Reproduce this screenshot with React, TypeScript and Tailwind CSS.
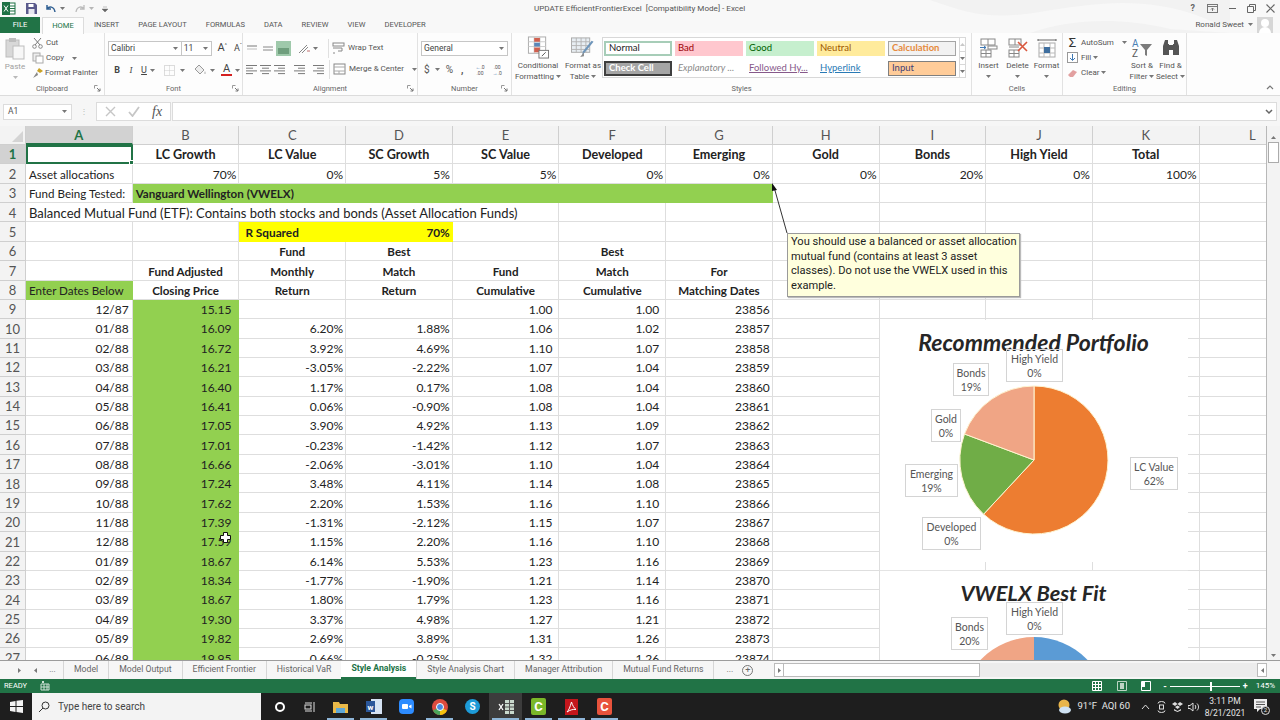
import type { ReactNode } from 'react';

const DATA: [string, string, string, string, string, string, string][] = [
  ['12/87', '15.15', '', '', '1.00', '1.00', '23856'],
  ['01/88', '16.09', '6.20%', '1.88%', '1.06', '1.02', '23857'],
  ['02/88', '16.72', '3.92%', '4.69%', '1.10', '1.07', '23858'],
  ['03/88', '16.21', '-3.05%', '-2.22%', '1.07', '1.04', '23859'],
  ['04/88', '16.40', '1.17%', '0.17%', '1.08', '1.04', '23860'],
  ['05/88', '16.41', '0.06%', '-0.90%', '1.08', '1.04', '23861'],
  ['06/88', '17.05', '3.90%', '4.92%', '1.13', '1.09', '23862'],
  ['07/88', '17.01', '-0.23%', '-1.42%', '1.12', '1.07', '23863'],
  ['08/88', '16.66', '-2.06%', '-3.01%', '1.10', '1.04', '23864'],
  ['09/88', '17.24', '3.48%', '4.11%', '1.14', '1.08', '23865'],
  ['10/88', '17.62', '2.20%', '1.53%', '1.16', '1.10', '23866'],
  ['11/88', '17.39', '-1.31%', '-2.12%', '1.15', '1.07', '23867'],
  ['12/88', '17.59', '1.15%', '2.20%', '1.16', '1.10', '23868'],
  ['01/89', '18.67', '6.14%', '5.53%', '1.23', '1.16', '23869'],
  ['02/89', '18.34', '-1.77%', '-1.90%', '1.21', '1.14', '23870'],
  ['03/89', '18.67', '1.80%', '1.79%', '1.23', '1.16', '23871'],
  ['04/89', '19.30', '3.37%', '4.98%', '1.27', '1.21', '23872'],
  ['05/89', '19.82', '2.69%', '3.89%', '1.31', '1.26', '23873'],
  ['06/89', '19.95', '0.66%', '-0.25%', '1.32', '1.26', '23874'],
];

const COLS = ['A', 'B', 'C', 'D', 'E', 'F', 'G', 'H', 'I', 'J', 'K', 'L'];

function Caret({ className = '' }: { className?: string }) {
  return (
    <svg width="5" height="3" viewBox="0 0 5 3" className={className}>
      <path d="M0 0h5L2.5 3z" fill="#777" />
    </svg>
  );
}

function Launcher() {
  return (
    <svg width="7" height="7" viewBox="0 0 7 7" className="absolute right-[3px] bottom-[3px]">
      <path d="M.5.5h3M.5.5v3" stroke="#999" fill="none" />
      <path d="M3 3l3 3M6 3.5V6H3.5" stroke="#777" fill="none" />
    </svg>
  );
}

function Group({ w, label, launcher, children }: { w: string; label: string; launcher?: boolean; children: ReactNode }) {
  return (
    <div className={`${w} relative flex h-full shrink-0 flex-col whitespace-nowrap border-r border-[#e2e2e2]`}>
      <div className="min-h-0 flex-1">{children}</div>
      <div className="flex h-[12px] items-center justify-center pb-[1px] text-[7.5px] text-[#666]">{label}</div>
      {launcher && <Launcher />}
    </div>
  );
}

function Lines({ kind }: { kind: 'left' | 'center' | 'right' }) {
  const rows = kind === 'left' ? [[1, 12], [1, 8], [1, 12], [1, 8]] : kind === 'center' ? [[1, 12], [3, 10], [1, 12], [3, 10]] : [[1, 12], [5, 12], [1, 12], [5, 12]];
  return (
    <svg width="13" height="11" viewBox="0 0 13 11">
      {rows.map((r, i) => (
        <path key={i} d={`M${r[0]} ${1.5 + i * 2.7}H${r[1]}`} stroke="#7a7a7a" />
      ))}
    </svg>
  );
}

function ClipboardGroup() {
  return (
    <Group w="w-[105px]" label="Clipboard" launcher>
      <div className="flex h-full">
        <div className="flex w-[30px] flex-col items-center pt-[4px] text-[8px] text-[#a0a0a0]">
          <svg width="22" height="23" viewBox="0 0 22 23">
            <rect x="2" y="3" width="13" height="17" fill="#d8d8d8" stroke="#bdbdbd" />
            <rect x="5" y="1" width="7" height="4" fill="#bdbdbd" />
            <rect x="9" y="9" width="11" height="13" fill="#f7f7f7" stroke="#bdbdbd" />
          </svg>
          <span className="mt-[2px] leading-[10px]">Paste</span>
          <Caret className="mt-[4px] opacity-50" />
        </div>
        <div className="flex flex-col gap-[3px] pl-[2px] pt-[4px] text-[8px] leading-[12px] text-[#555]">
          <div className="flex items-center gap-[3px]">
            <svg width="11" height="12" viewBox="0 0 11 12">
              <path d="M2 1l6 7M9 1L3 8" stroke="#777" fill="none" />
              <circle cx="2.5" cy="9.5" r="1.8" fill="none" stroke="#888" />
              <circle cx="8.5" cy="9.5" r="1.8" fill="none" stroke="#888" />
            </svg>
            Cut
          </div>
          <div className="flex items-center gap-[2px]">
            <svg width="12" height="12" viewBox="0 0 12 12">
              <rect x="1" y="1" width="7" height="8" fill="#eee" stroke="#aaa" />
              <rect x="4" y="4" width="7" height="7" fill="#fff" stroke="#aaa" />
            </svg>
            Copy
            <Caret className="ml-[6px]" />
          </div>
          <div className="flex items-center gap-[1px]">
            <svg width="12" height="12" viewBox="0 0 12 12">
              <path d="M7 1l4 3-3 2-3-2z" fill="#c9a227" />
              <path d="M5 5L1 11l5-3z" fill="#888" />
            </svg>
            Format Painter
          </div>
        </div>
      </div>
    </Group>
  );
}

function FontGroup() {
  return (
    <Group w="w-[138px]" label="Font" launcher>
      <div className="flex items-center pl-[3px] pt-[7px] text-[8.5px] text-[#444]">
        <div className="flex h-[15px] w-[74px] items-center justify-between border border-[#c6c6c6] bg-white px-[2px]">
          Calibri
          <Caret className="mr-[1px]" />
        </div>
        <div className="flex h-[15px] w-[30px] items-center justify-between border border-l-0 border-[#c6c6c6] bg-white px-[2px]">
          11
          <Caret className="mr-[1px]" />
        </div>
        <span className="ml-[6px] text-[11px]">A</span>
        <span className="relative -top-[3px] text-[5px]">^</span>
        <span className="ml-[7px] text-[9px]">A</span>
        <span className="relative -top-[3px] text-[5px]">ˇ</span>
      </div>
      <div className="flex items-center pl-[5px] pt-[7px] text-[#444]">
        <span className="w-[14px] text-center text-[9px] font-bold">B</span>
        <span className="w-[14px] text-center font-serif text-[9px] italic">I</span>
        <span className="w-[12px] text-center text-[9px] underline">U</span>
        <Caret />
        <svg width="11" height="11" viewBox="0 0 11 11" className="ml-[9px]">
          <rect x=".5" y=".5" width="10" height="10" fill="none" stroke="#bbb" strokeDasharray="1 1" />
          <path d="M.5 5.5h10M5.5.5v10" stroke="#ccc" strokeDasharray="1 1" />
        </svg>
        <Caret className="ml-[5px]" />
        <svg width="14" height="13" viewBox="0 0 14 13" className="ml-[8px]">
          <path d="M6 1l5 5-4 4-5-5z" fill="#eee" stroke="#999" />
          <path d="M12 7c1 2 1 3 0 3s-1-1 0-3z" fill="#bbb" />
        </svg>
        <Caret className="ml-[3px]" />
        <div className="ml-[6px] flex flex-col items-center">
          <span className="text-[11px] leading-[10px] text-[#444]">A</span>
          <span className="h-[2px] w-[11px] bg-[#d42020]" />
        </div>
        <Caret className="ml-[3px]" />
      </div>
    </Group>
  );
}

function AlignmentGroup() {
  return (
    <Group w="w-[175px]" label="Alignment" launcher>
      <div className="flex h-[22px] items-center pl-[1px] pt-[8px] text-[8px] text-[#555]">
        <div className="flex w-[15px] justify-center">
          <svg width="12" height="9" viewBox="0 0 12 9">
            <rect x="1" y="1" width="10" height="2" fill="#bbb" />
            <rect x="1" y="4" width="10" height="2" fill="#ddd" />
          </svg>
        </div>
        <div className="flex w-[17px] justify-center">
          <svg width="12" height="9" viewBox="0 0 12 9">
            <path d="M1 3h10M1 6h10" stroke="#888" />
          </svg>
        </div>
        <div className="flex h-[15px] w-[15px] items-end justify-center bg-[#9fc9ab] pb-[2px]">
          <svg width="11" height="6" viewBox="0 0 11 6">
            <rect width="11" height="6" fill="#6f9e7d" />
          </svg>
        </div>
        <div className="ml-[5px] flex w-[16px] items-center justify-center">
          <svg width="13" height="11" viewBox="0 0 13 11">
            <path d="M1 10l8-8M4 10L10 4" stroke="#888" />
            <path d="M9 8h3" stroke="#c07070" />
          </svg>
        </div>
        <Caret className="ml-[1px]" />
        <span className="ml-[10px] h-[19px] w-px bg-[#e0e0e0]" />
        <div className="ml-[3px] flex items-center gap-[3px]">
          <svg width="13" height="12" viewBox="0 0 13 12">
            <rect x="1" y="1" width="11" height="3" fill="#fff" stroke="#888" />
            <path d="M1 6h9v3H6M3 11H1" stroke="#888" fill="none" />
          </svg>
          Wrap Text
        </div>
      </div>
      <div className="flex h-[21px] items-center pl-[1px] pt-[7px] text-[8px] text-[#555]">
        <div className="flex w-[16px] justify-center">
          <Lines kind="left" />
        </div>
        <div className="flex w-[16px] justify-center">
          <Lines kind="center" />
        </div>
        <div className="flex w-[16px] justify-center">
          <Lines kind="right" />
        </div>
        <div className="ml-[6px] flex w-[15px] justify-center">
          <Lines kind="right" />
        </div>
        <div className="ml-[5px] flex w-[15px] justify-center">
          <Lines kind="right" />
        </div>
        <span className="ml-[4px] h-[19px] w-px bg-[#e0e0e0]" />
        <div className="ml-[3px] flex items-center gap-[3px]">
          <svg width="13" height="12" viewBox="0 0 13 12">
            <rect x="1" y="1" width="11" height="10" fill="#fff" stroke="#888" />
            <path d="M1 4h11M1 8h11" stroke="#aaa" />
            <path d="M6 8v3" stroke="#aaa" />
          </svg>
          Merge &amp; Center
          <Caret className="ml-[5px]" />
        </div>
      </div>
    </Group>
  );
}

function NumberGroup() {
  return (
    <Group w="w-[94px]" label="Number" launcher>
      <div className="px-[3px] pt-[8px] text-[8.5px] text-[#444]">
        <div className="flex h-[15px] w-[87px] items-center justify-between border border-[#c6c6c6] bg-white px-[2px]">
          General
          <Caret className="mr-[1px]" />
        </div>
        <div className="flex items-center pl-[3px] pt-[6px] text-[#555]">
          <span className="text-[10px]">$</span>
          <Caret className="ml-[5px]" />
          <span className="ml-[6px] text-[10px]">%</span>
          <span className="ml-[8px] text-[10px] font-bold">,</span>
          <span className="ml-[12px] text-center text-[5px] leading-[6px]">
            <span className="text-[#3a70a8]">←</span>.0<br />.00
          </span>
          <span className="ml-[8px] text-center text-[5px] leading-[6px]">
            .00<br /><span className="text-[#3a70a8]">→</span>.0
          </span>
        </div>
      </div>
    </Group>
  );
}

function StyleCell({ className, children }: { className: string; children: ReactNode }) {
  return <div className={`flex h-[15px] w-[68px] items-center whitespace-nowrap pl-[3px] text-[9.5px] ${className}`}>{children}</div>;
}

function Big({ w, icon, lines }: { w: string; icon: ReactNode; lines: string[] }) {
  return (
    <div className={`${w} flex flex-col items-center pt-[3px] text-[8px] leading-[11px] text-[#555]`}>
      <div className="flex h-[23px] items-center">{icon}</div>
      <span className="mt-[1px] whitespace-nowrap">{lines[0]}</span>
      <span className="flex items-center gap-[2px] whitespace-nowrap">
        {lines[1]}
        <Caret />
      </span>
    </div>
  );
}

function StylesGroup() {
  return (
    <Group w="w-[460px]" label="Styles">
      <div className="flex h-full">
        <Big
          w="w-[52px]"
          lines={['Conditional', 'Formatting']}
          icon={
            <svg width="26" height="23" viewBox="0 0 26 24">
              <rect x="3" y="1" width="18" height="17" fill="#fff" stroke="#aaa" />
              <path d="M3 6h18M3 11h18M9 1v17M15 1v17" stroke="#ccc" />
              <rect x="9" y="2" width="6" height="4" fill="#d0604f" />
              <rect x="9" y="7" width="6" height="4" fill="#5b87b8" />
              <rect x="9" y="12" width="6" height="5" fill="#d0604f" />
              <rect x="14" y="15" width="10" height="8" fill="#fff" stroke="#777" />
              <path d="M17 21l4-4" stroke="#555" />
            </svg>
          }
        />
        <Big
          w="w-[38px]"
          lines={['Format as', 'Table']}
          icon={
            <svg width="26" height="23" viewBox="0 0 26 24">
              <rect x="1" y="2" width="19" height="15" fill="#e8eef3" stroke="#aaa" />
              <path d="M1 6h19M1 10h19M1 14h19M6 2v15M11 2v15M16 2v15" stroke="#b5b5b5" />
              <path d="M24 6l-9 11-3 3 1-4 9-11z" fill="#6e95ba" />
              <path d="M14 17l-4 5 4-1z" fill="#8a8a8a" />
            </svg>
          }
        />
        <div className="mt-[4px] flex h-[41px] w-[364px] border border-[#d8d8d8] bg-white">
          <div className="grid flex-1 grid-cols-[repeat(5,71px)] gap-y-[3px] pl-[1px] pt-[3px] font-['Lato',sans-serif]">
            <StyleCell className="border-2 border-[#a7cdb8] text-[#222]">Normal</StyleCell>
            <StyleCell className="bg-[#ffc7ce] text-[#9c0006]">Bad</StyleCell>
            <StyleCell className="bg-[#c6efce] text-[#006100]">Good</StyleCell>
            <StyleCell className="bg-[#ffeb9c] text-[#9c5700]">Neutral</StyleCell>
            <StyleCell className="border border-[#a5a5a5] bg-[#f2f2f2] font-bold text-[#e68a3c]">Calculation</StyleCell>
            <StyleCell className="border-2 border-[#3f3f3f] bg-[#a5a5a5] font-bold text-white">Check Cell</StyleCell>
            <StyleCell className="italic text-[#8a8a8a]">Explanatory ...</StyleCell>
            <StyleCell className="text-[#86598a] underline">Followed Hy...</StyleCell>
            <StyleCell className="text-[#2a7ab5] underline">Hyperlink</StyleCell>
            <StyleCell className="border border-[#7f7f7f] bg-[#ffcc99] text-[#3f3f76]">Input</StyleCell>
          </div>
          <div className="flex w-[8px] flex-col border-l border-[#d8d8d8] text-[5px] text-[#888]">
            <div className="flex h-[13px] items-center justify-center"><Caret className="rotate-180 opacity-40" /></div>
            <div className="flex h-[14px] items-center justify-center border-y border-[#d8d8d8]"><Caret /></div>
            <div className="flex flex-1 items-center justify-center"><Caret /></div>
          </div>
        </div>
      </div>
    </Group>
  );
}

function CellsItem({ w, label, icon }: { w: string; label: string; icon: ReactNode }) {
  return (
    <div className={`${w} flex flex-col items-center pt-[3px] text-[8px] leading-[11px] text-[#555]`}>
      <div className="flex h-[23px] items-center">{icon}</div>
      <span className="mt-[1px]">{label}</span>
      <Caret className="mt-[4px]" />
    </div>
  );
}

function CellsGroup() {
  return (
    <Group w="w-[91px]" label="Cells">
      <div className="flex h-full pl-[2px]">
        <CellsItem
          w="w-[29px]"
          label="Insert"
          icon={
            <svg width="20" height="20" viewBox="0 0 20 20">
              <rect x="2" y="1" width="14" height="6" fill="#fff" stroke="#888" />
              <path d="M9 1v6" stroke="#888" />
              <rect x="9" y="8" width="9" height="3" fill="#fff" stroke="#888" />
              <path d="M1 9.5h6M5 8l2 1.5L5 11" stroke="#3f79b5" fill="none" />
              <rect x="2" y="12" width="10" height="7" fill="#fff" stroke="#888" />
              <path d="M7 12v7M2 15.5h10" stroke="#888" />
            </svg>
          }
        />
        <CellsItem
          w="w-[29px]"
          label="Delete"
          icon={
            <svg width="22" height="20" viewBox="0 0 22 20">
              <rect x="2" y="1" width="12" height="6" fill="#fff" stroke="#888" />
              <path d="M8 1v6M2 9h10" stroke="#888" />
              <rect x="2" y="12" width="10" height="7" fill="#fff" stroke="#888" />
              <path d="M7 12v7M2 15.5h10" stroke="#888" />
              <path d="M11 4l9 9M20 4l-9 9" stroke="#d9573d" strokeWidth="1.6" />
            </svg>
          }
        />
        <CellsItem
          w="w-[29px]"
          label="Format"
          icon={
            <svg width="20" height="20" viewBox="0 0 20 20">
              <path d="M1 2h18M1 1v2M19 1v2" stroke="#666" />
              <rect x="2" y="5" width="16" height="14" fill="#fff" stroke="#aaa" />
              <path d="M7 5v14M13 5v14M2 10h16M2 15h16" stroke="#bbb" />
              <rect x="7" y="9" width="6" height="6" fill="#3f6f9f" />
            </svg>
          }
        />
      </div>
    </Group>
  );
}

function EditingGroup() {
  return (
    <Group w="w-[124px]" label="Editing">
      <div className="flex h-full text-[8px] text-[#555]">
        <div className="flex w-[66px] flex-col gap-[4px] pl-[4px] pt-[4px] leading-[11px]">
          <div className="flex items-center gap-[2px]">
            <span className="w-[11px] text-center text-[13px] leading-[11px] text-[#333]">Σ</span>
            <span className="ml-[1px]">AutoSum</span>
            <Caret className="ml-[6px]" />
          </div>
          <div className="flex items-center gap-[2px]">
            <svg width="11" height="11" viewBox="0 0 11 11">
              <rect x=".5" y=".5" width="10" height="10" fill="#fff" stroke="#999" />
              <path d="M5.5 2v6M3 6l2.5 2.5L8 6" stroke="#3f79b5" fill="none" />
            </svg>
            <span className="ml-[1px]">Fill</span>
            <Caret />
          </div>
          <div className="flex items-center gap-[2px]">
            <svg width="11" height="10" viewBox="0 0 11 10">
              <path d="M1 7l5-5 4 2-4 5H3z" fill="#e2a0a0" />
            </svg>
            <span className="ml-[1px]">Clear</span>
            <Caret />
          </div>
        </div>
        <Big
          w="w-[26px]"
          lines={['Sort &', 'Filter']}
          icon={
            <svg width="22" height="22" viewBox="0 0 22 22">
              <text x="1" y="10" fontSize="10" fill="#4a7fb5" fontFamily="Roboto">A</text>
              <text x="1" y="20" fontSize="10" fill="#555" fontFamily="Roboto">Z</text>
              <path d="M9 7h12l-5 6v6l-2-1v-5z" fill="#7c7c7c" />
            </svg>
          }
        />
        <Big
          w="w-[31px]"
          lines={['Find &', 'Select']}
          icon={
            <svg width="18" height="18" viewBox="0 0 18 18">
              <path d="M3 1h3v4h1v11H1V7zM12 1h3l2 6v9h-6V5h1zM7 6h4v5H7z" fill="#555" />
            </svg>
          }
        />
      </div>
    </Group>
  );
}

function Ribbon() {
  return (
    <div className="relative flex h-[63px] shrink-0 border-b border-[#dcdcdc] bg-[#fdfdfd]">
      <ClipboardGroup />
      <FontGroup />
      <AlignmentGroup />
      <NumberGroup />
      <StylesGroup />
      <CellsGroup />
      <EditingGroup />
      <svg width="8" height="5" viewBox="0 0 8 5" className="absolute bottom-[5px] right-[6px]">
        <path d="M1 4l3-3 3 3" stroke="#777" fill="none" strokeWidth="1.2" />
      </svg>
    </div>
  );
}

function TitleBar() {
  return (
    <div className="relative flex h-[17px] shrink-0 items-center">
      <svg width="14" height="13" viewBox="0 0 14 13" className="ml-[2px]">
        <rect x="5" y="1" width="8" height="11" fill="#fff" stroke="#1e7145" />
        <path d="M7 4h6M7 6.5h6M7 9h6" stroke="#1e7145" />
        <rect width="8" height="13" fill="#1e7145" />
        <path d="M2 3.5l4 6M6 3.5l-4 6" stroke="#fff" />
      </svg>
      <svg width="11" height="11" viewBox="0 0 11 11" className="ml-[10px]">
        <path d="M0 0h9l2 2v9H0z" fill="#5a5a8c" />
        <rect x="2.5" y="1" width="5" height="3" fill="#fff" />
        <rect x="2.5" y="6" width="6" height="5" fill="#e8e8f0" />
      </svg>
      <svg width="12" height="10" viewBox="0 0 12 10" className="ml-[8px]">
        <path d="M2 1v4h4M2 5c2-3 7-3 8 3" stroke="#2f5f92" strokeWidth="1.5" fill="none" />
      </svg>
      <Caret className="ml-[3px]" />
      <svg width="12" height="10" viewBox="0 0 12 10" className="ml-[9px]">
        <path d="M10 1v4H6M10 5C8 2 3 2 2 8" stroke="#bbb" strokeWidth="1.3" fill="none" />
      </svg>
      <Caret className="ml-[3px] opacity-50" />
      <svg width="6" height="6" viewBox="0 0 6 6" className="ml-[8px]">
        <path d="M1 1h4M0 3h6L3 6z" fill="#666" stroke="#666" strokeWidth=".4" />
      </svg>
      <svg width="300" height="33" viewBox="0 0 300 33" className="absolute left-[930px] top-0">
        <path d="M0 0c40 14 60 20 110 12S190 0 230 6s50 18 70 20V0z" fill="#f2f2f2" />
        <path d="M100 33c40-14 90-16 140-4l60 4z" fill="#f2f2f2" />
      </svg>
      <div className="absolute left-[534px] top-[1px] whitespace-nowrap text-[8.1px] leading-[15px] text-[#555]">
        UPDATE EfficientFrontierExcel&nbsp; [Compatibility Mode] - Excel
      </div>
      <div className="relative ml-auto flex items-center text-[#666]">
        <span className="mr-[12px] text-[9px] font-bold">?</span>
        <svg width="11" height="9" viewBox="0 0 11 9" className="mr-[11px]">
          <rect x=".5" y=".5" width="10" height="8" fill="none" stroke="#777" />
          <path d="M.5 2.5h10M5.5 7V4M4 5.5L5.5 4 7 5.5" stroke="#777" fill="none" />
        </svg>
        <span className="mr-[11px] h-px w-[7px] bg-[#666]" />
        <svg width="9" height="9" viewBox="0 0 9 9" className="mr-[10px]">
          <path d="M2.5 2V.5h6v6H7M.5 2.5h6v6h-6z" stroke="#666" fill="none" />
        </svg>
        <svg width="9" height="9" viewBox="0 0 9 9" className="mr-[5px]">
          <path d="M.5.5l8 8M8.5.5l-8 8" stroke="#666" strokeWidth="1.1" />
        </svg>
      </div>
    </div>
  );
}

function TabRow() {
  const tabs = ['INSERT', 'PAGE LAYOUT', 'FORMULAS', 'DATA', 'REVIEW', 'VIEW', 'DEVELOPER'];
  return (
    <div className="relative flex h-[16px] shrink-0 items-stretch text-[7.6px] text-[#555]">
      <div className="flex w-[40px] items-center justify-center bg-[#217346] text-white">FILE</div>
      <div className="relative z-10 ml-[2px] -mb-px mr-[10px] flex w-[42px] items-center justify-center border-x border-t border-[#dcdcdc] bg-[#fdfdfd] text-[#217346]">HOME</div>
      <div className="flex gap-[19px]">
        {tabs.map((t) => (
          <div key={t} className="flex items-center whitespace-nowrap">{t}</div>
        ))}
      </div>
      <div className="relative ml-auto flex items-center pb-[1px] pr-[7px] text-[8px] text-[#555]">
        Ronald Sweet
        <Caret className="ml-[4px]" />
        <div className="relative ml-[4px] h-[16px] w-[16px] overflow-hidden bg-[#d6d6d6]">
          <div className="absolute left-[4px] top-[2px] h-[8px] w-[8px] rounded-full bg-white" />
          <div className="absolute left-[2px] top-[10px] h-[8px] w-[12px] rounded-t-md bg-white" />
        </div>
      </div>
    </div>
  );
}

function FormulaBar() {
  return (
    <div className="flex h-[30px] shrink-0 items-center bg-[#f6f6f6] pb-[1px] pt-[2px]">
      <div className="ml-[3px] flex h-[16px] w-[69px] items-center justify-between border border-[#dcdcdc] bg-white px-[4px] text-[8.5px] text-[#555]">
        A1
        <Caret />
      </div>
      <span className="ml-[8px] text-[8px] text-[#bbb]">⋮</span>
      <div className="ml-[8px] flex h-[19px] w-[75px] items-center gap-[12px] border border-[#dcdcdc] bg-white pl-[8px]">
        <svg width="11" height="11" viewBox="0 0 11 11">
          <path d="M1 1l9 9M10 1l-9 9" stroke="#c6c6c6" strokeWidth="1.4" />
        </svg>
        <svg width="12" height="11" viewBox="0 0 12 11">
          <path d="M1 6l3.5 4L11 1" stroke="#c6c6c6" strokeWidth="1.8" fill="none" />
        </svg>
        <span className="font-['Liberation_Serif',serif] text-[14px] italic leading-[14px] text-[#555]">fx</span>
      </div>
      <div className="ml-[1px] mr-[3px] flex h-[19px] flex-1 items-center justify-end border border-[#dcdcdc] bg-white pr-[3px]">
        <svg width="8" height="6" viewBox="0 0 8 6">
          <path d="M1 1l3 3 3-3" stroke="#666" strokeWidth="1.5" fill="none" />
        </svg>
      </div>
    </div>
  );
}

// fill cells hide their gridlines, so the border colour goes with the fill
const FILLS = {
  none: 'border-[#dedede]',
  green: 'border-[#92d050] bg-[#92d050]',
  yellow: 'border-[#ffff00] bg-[#ffff00]',
};

function Cell({ className = '', fill = 'none', children }: { className?: string; fill?: keyof typeof FILLS; children?: ReactNode }) {
  return (
    <div className={`flex min-w-0 items-center whitespace-nowrap border-b border-r pt-[2px] text-[#222] ${FILLS[fill]} ${className}`}>
      {children}
    </div>
  );
}

function RowHead({ n, active }: { n: number; active?: boolean }) {
  return (
    <div className={`flex items-center justify-center border-b border-r border-[#cfcfcf] pt-[2px] text-[13px] ${active ? 'bg-[#d2d2d2] font-bold text-[#217346]' : 'bg-[#f3f3f3] text-[#555]'}`}>
      {n}
    </div>
  );
}

function Blank({ n }: { n: number }) {
  return (
    <>
      {Array.from({ length: n }, (_, i) => (
        <Cell key={i} />
      ))}
    </>
  );
}

function Head({ children, top }: { children: ReactNode; top?: boolean }) {
  return <Cell className={`justify-center font-bold ${top ? 'text-[12.6px]' : 'text-[11.6px]'}`}>{children}</Cell>;
}

function Num({ children, pad = 'pr-[2px]' }: { children: ReactNode; pad?: string }) {
  return <Cell className={`justify-end text-[12px] ${pad}`}>{children}</Cell>;
}

function Grid() {
  return (
    <div className="grid grid-cols-[26px_repeat(12,106.7px)] grid-rows-[19px] auto-rows-[19.36px] font-['Lato',sans-serif]">
      <div className="relative border-b border-r border-[#cfcfcf] bg-[#f3f3f3]">
        <svg width="11" height="11" viewBox="0 0 11 11" className="absolute bottom-[2px] right-[2px]">
          <path d="M11 0v11H0z" fill="#d4d4d4" />
        </svg>
      </div>
      {COLS.map((c) =>
        c === 'A' ? (
          <div key={c} className="flex items-center justify-center border-b-2 border-r border-b-[#217346] border-r-[#cfcfcf] bg-[#d2d2d2] pt-[2px] text-[13px] font-bold text-[#217346]">
            {c}
          </div>
        ) : (
          <div key={c} className="flex items-center justify-center border-b border-r border-[#cfcfcf] bg-[#f3f3f3] pt-[2px] text-[13px] text-[#555]">
            {c}
          </div>
        ),
      )}

      <RowHead n={1} active />
      <div className="relative border-2 border-[#217346]">
        <span className="absolute -bottom-[3px] -right-[3px] h-[5px] w-[5px] border border-white bg-[#217346]" />
      </div>
      <Head top>LC Growth</Head>
      <Head top>LC Value</Head>
      <Head top>SC Growth</Head>
      <Head top>SC Value</Head>
      <Head top>Developed</Head>
      <Head top>Emerging</Head>
      <Head top>Gold</Head>
      <Head top>Bonds</Head>
      <Head top>High Yield</Head>
      <Head top>Total</Head>
      <Blank n={1} />

      <RowHead n={2} />
      <Cell className="pl-[3px] text-[11.6px]">Asset allocations</Cell>
      {['70%', '0%', '5%', '5%', '0%', '0%', '0%', '20%', '0%', '100%'].map((v, i) => (
        <Num key={i}>{v}</Num>
      ))}
      <Blank n={1} />

      <RowHead n={3} />
      <Cell className="pl-[3px] text-[11.6px]">Fund Being Tested:</Cell>
      <Cell fill="green" className="col-span-6 pl-[3px] text-[11.6px] font-bold">Vanguard Wellington (VWELX)</Cell>
      <Blank n={5} />

      <RowHead n={4} />
      <Cell className="col-span-5 pl-[3px] text-[13px]">Balanced Mutual Fund (ETF): Contains both stocks and bonds (Asset Allocation Funds)</Cell>
      <Blank n={7} />

      <RowHead n={5} />
      <Blank n={2} />
      <Cell fill="yellow" className="col-span-2 justify-between pl-[6px] pr-[2px] text-[11.8px] font-bold">
        <span>R Squared</span>
        <span>70%</span>
      </Cell>
      <Blank n={8} />

      <RowHead n={6} />
      <Blank n={2} />
      <Head>Fund</Head>
      <Head>Best</Head>
      <Blank n={1} />
      <Head>Best</Head>
      <Blank n={6} />

      <RowHead n={7} />
      <Blank n={1} />
      <Head>Fund Adjusted</Head>
      <Head>Monthly</Head>
      <Head>Match</Head>
      <Head>Fund</Head>
      <Head>Match</Head>
      <Head>For</Head>
      <Blank n={5} />

      <RowHead n={8} />
      <Cell fill="green" className="pl-[3px] text-[11.6px]">Enter Dates Below</Cell>
      <Head>Closing Price</Head>
      <Head>Return</Head>
      <Head>Return</Head>
      <Head>Cumulative</Head>
      <Head>Cumulative</Head>
      <Head>Matching Dates</Head>
      <Blank n={5} />

      {DATA.map((r, i) => (
        <DataRow key={r[6]} n={i + 9} r={r} />
      ))}
    </div>
  );
}

function DataRow({ n, r }: { n: number; r: string[] }) {
  return (
    <>
      <RowHead n={n} />
      <Num pad="pr-[3px]">{r[0]}</Num>
      <Cell fill="green" className="justify-end pr-[7px] text-[12px]">{r[1]}</Cell>
      <Num>{r[2]}</Num>
      <Num>{r[3]}</Num>
      <Num pad="pr-[6px]">{r[4]}</Num>
      <Num pad="pr-[6px]">{r[5]}</Num>
      <Num>{r[6]}</Num>
      <Blank n={5} />
    </>
  );
}

function Label({ pos, a, b }: { pos: string; a: string; b: string }) {
  return (
    <div className={`${pos} absolute flex h-[33px] flex-col items-center justify-center border border-[#d4d4d4] text-[10.5px] leading-[14px] text-[#555]`}>
      <span>{a}</span>
      <span>{b}</span>
    </div>
  );
}

function Charts() {
  return (
    <>
      <div className="absolute left-[880px] top-[194px] h-[242px] w-[308px] bg-white font-['Lato',sans-serif]">
        <svg width="308" height="242" viewBox="880 320 308 242" className="absolute left-0 top-0">
          <path d="M1034 460V386A74 74 0 1 1 983.6 514.2Z" fill="#ed7d31" stroke="#fff4d0" />
          <path d="M1034 460L983.6 514.2A74 74 0 0 1 964.5 434Z" fill="#70ad47" stroke="#fff4d0" />
          <path d="M1034 460L964.5 434A74 74 0 0 1 1034 386Z" fill="#f0a585" stroke="#fff4d0" />
        </svg>
        <div className="absolute inset-x-0 top-[8px] -ml-[1px] text-center text-[23px] font-bold italic leading-[28px] text-[#262626]">Recommended Portfolio</div>
        <Label pos="left-[126px] top-[29px] w-[57px]" a="High Yield" b="0%" />
        <Label pos="left-[73px] top-[43px] w-[36px]" a="Bonds" b="19%" />
        <Label pos="left-[51px] top-[89px] w-[30px]" a="Gold" b="0%" />
        <Label pos="left-[25px] top-[144px] w-[53px]" a="Emerging" b="19%" />
        <Label pos="left-[42px] top-[197px] w-[59px]" a="Developed" b="0%" />
        <Label pos="left-[250px] top-[137px] w-[48px]" a="LC Value" b="62%" />
      </div>
      <div className="absolute left-[880px] top-[444px] h-[100px] w-[308px] overflow-hidden border-t border-[#e4e4e4] bg-white font-['Lato',sans-serif]">
        <svg width="308" height="100" viewBox="880 570 308 100" className="absolute left-0 top-0">
          <path d="M1034 710V636A74 74 0 0 1 1108 710Z" fill="#5b9bd5" />
          <path d="M1034 710V636A74 74 0 0 0 960 710Z" fill="#f0a585" />
        </svg>
        <div className="absolute inset-x-0 top-[8px] -ml-[1px] text-center text-[21.8px] font-bold italic leading-[28px] text-[#262626]">VWELX Best Fit</div>
        <Label pos="left-[126px] top-[31px] w-[57px]" a="High Yield" b="0%" />
        <Label pos="left-[71px] top-[46px] w-[37px]" a="Bonds" b="20%" />
      </div>
    </>
  );
}

function Note() {
  return (
    <>
      <svg width="30" height="56" viewBox="0 0 30 56" className="absolute left-[766px] top-[55px]">
        <path d="M21 52L8 6" stroke="#333" fill="none" />
        <path d="M6 2l5 7-5 1z" fill="#111" />
      </svg>
      <div className="absolute left-[787px] top-[107px] flex h-[64px] w-[233px] flex-col justify-center whitespace-nowrap border border-[#9a9a9a] bg-[#ffffdd] pb-[2px] pl-[3px] font-['Roboto',sans-serif] text-[11.1px] leading-[14.5px] text-[#222] shadow-[1px_1px_1px_#bbb]">
        <span>You should use a balanced or asset allocation</span>
        <span>mutual fund (contains at least 3 asset</span>
        <span>classes). Do not use the VWELX used in this</span>
        <span>example.</span>
      </div>
    </>
  );
}

function Sheet() {
  return (
    <div className="flex min-h-0 flex-1 border-b border-[#9c9c9c]">
      <div className="relative min-w-0 flex-1 overflow-hidden border-r border-[#b8b8b8] bg-white">
        <Grid />
        <Note />
        <Charts />
        <svg width="11" height="11" viewBox="0 0 11 11" className="absolute left-[220px] top-[406px]">
          <path d="M3.5.5h4v3h3v4h-3v3h-4v-3h-3v-4h3z" fill="#fff" stroke="#111" />
        </svg>
      </div>
      <div className="flex w-[13px] shrink-0 flex-col bg-[#f3f3f3]">
        <div className="mx-[1px] mt-[7px] flex h-[8px] items-center justify-center"><Caret className="rotate-180" /></div>
        <div className="mx-[1px] mt-[1px] h-[21px] border border-[#ababab] bg-white" />
        <div className="flex-1" />
        <div className="flex h-[9px] items-center justify-center"><Caret /></div>
      </div>
    </div>
  );
}

function SheetTabs() {
  const tabs = ['Model', 'Model Output', 'Efficient Frontier', 'Historical VaR', 'Style Analysis', 'Style Analysis Chart', 'Manager Attribution', 'Mutual Fund Returns'];
  return (
    <div className="flex h-[18px] shrink-0 items-stretch bg-[#f6f6f6] text-[8.7px] text-[#666]">
      <div className="flex w-[63px] items-center justify-around pl-[12px] pr-[2px] text-[8px]">
        <Caret className="-rotate-90" />
        <Caret className="rotate-90" />
        <span>...</span>
      </div>
      {tabs.map((t) => (
        <div
          key={t}
          className={`flex items-center whitespace-nowrap px-[10px] ${t === 'Style Analysis' ? 'border-b-2 border-[#217346] bg-white font-bold text-[#217346]' : 'border-l border-[#d6d6d6]'}`}
        >
          {t}
        </div>
      ))}
      <div className="flex w-[46px] items-center gap-[9px] border-l border-[#d6d6d6] pl-[12px]">
        <span>...</span>
        <span className="flex h-[11px] w-[11px] items-center justify-center rounded-full border border-[#777] text-[9px] leading-[9px]">+</span>
      </div>
      <div className="ml-[15px] flex flex-1 items-center">
        <div className="flex h-[14px] w-[10px] items-center justify-center border border-[#bbb] bg-white"><Caret className="-rotate-90" /></div>
        <div className="h-[14px] w-[196px] border-y border-r border-[#bbb] bg-white" />
        <div className="h-[14px] flex-1 bg-[#ececec]" />
        <div className="flex h-[14px] w-[10px] items-center justify-center border border-[#bbb] bg-white"><Caret className="rotate-90" /></div>
        <div className="w-[13px]" />
      </div>
    </div>
  );
}

function StatusBar() {
  return (
    <div className="flex h-[14px] shrink-0 items-center bg-[#217346] pl-[4px] text-[7.5px] text-white">
      READY
      <svg width="10" height="10" viewBox="0 0 10 10" className="ml-[13px]">
        <path d="M1 3h8v6H1zM1 6h8M4 3v6M7 3v6" stroke="#cfe3d6" fill="none" />
        <rect x="2" y="0" width="2" height="2" fill="#cfe3d6" />
      </svg>
      <div className="ml-auto flex h-full items-center">
        <svg width="10" height="10" viewBox="0 0 10 10">
          <path d="M.5.5h9v9h-9zM.5 3.5h9M.5 6.5h9M3.5.5v9M6.5.5v9" stroke="#fff" fill="none" />
        </svg>
        <svg width="10" height="10" viewBox="0 0 10 10" className="ml-[15px]">
          <path d="M.5.5h9v9h-9z" stroke="#bcd4c4" fill="none" />
          <rect x="3" y="2" width="4" height="6" fill="#bcd4c4" />
        </svg>
        <svg width="10" height="10" viewBox="0 0 10 10" className="ml-[14px]">
          <path d="M.5.5h9v9h-9z" stroke="#fff" fill="none" />
          <rect x="1" y="1" width="3" height="5" fill="#fff" />
        </svg>
        <span className="ml-[12px] text-[9px] font-bold leading-[9px]">-</span>
        <div className="relative ml-[3px] h-px w-[70px] bg-white">
          <span className="absolute left-[40px] top-[-4px] h-[9px] w-[2px] bg-white" />
        </div>
        <span className="ml-[3px] text-[9px] font-bold leading-[9px]">+</span>
        <span className="ml-[8px] mr-[5px] text-[8px]">145%</span>
      </div>
    </div>
  );
}

function AppIcon({ active, open, children }: { active?: boolean; open?: boolean; children: ReactNode }) {
  return (
    <div className={`relative flex h-full w-[33px] items-center justify-center ${active ? 'bg-[#3c3c3c]' : ''}`}>
      {children}
      {open && <span className="absolute bottom-0 left-[3px] right-[3px] h-[2px] bg-[#8fb6d8]" />}
    </div>
  );
}

function Taskbar() {
  return (
    <div className="flex h-[27px] shrink-0 items-stretch bg-[#1e1e1e] text-white">
      <div className="flex w-[32px] items-center justify-center">
        <svg width="13" height="13" viewBox="0 0 13 13">
          <path d="M0 2l5.5-1v5H0zM6.5.8L13 0v6H6.5zM0 7h5.5v5L0 11zM6.5 7H13v6l-6.5-1z" fill="#f2f2f2" />
        </svg>
      </div>
      <div className="flex w-[229px] items-center gap-[8px] bg-[#f3f3f3] pl-[6px] text-[10px] text-[#444]">
        <svg width="12" height="12" viewBox="0 0 12 12">
          <circle cx="7.5" cy="4.5" r="3.5" fill="none" stroke="#333" />
          <path d="M5 7l-4 4" stroke="#333" />
        </svg>
        Type here to search
      </div>
      <div className="ml-[2px] flex items-center">
        <div className="flex w-[33px] justify-center">
          <span className="h-[10px] w-[10px] rounded-full border-2 border-white" />
        </div>
        <div className="flex w-[28px] justify-center">
          <svg width="12" height="12" viewBox="0 0 12 12">
            <path d="M1 2h7M1 10h7M10 1v10" stroke="#ddd" />
            <rect x="1" y="4" width="6" height="4" fill="none" stroke="#ddd" />
          </svg>
        </div>
      </div>
      <div className="flex">
        <AppIcon open>
          <svg width="15" height="14" viewBox="0 0 15 14">
            <path d="M0 2h6l1 2h8v9H0z" fill="#e9b949" />
            <rect x="3" y="8" width="9" height="5" fill="#5fa8d8" />
          </svg>
        </AppIcon>
        <AppIcon open>
          <svg width="16" height="15" viewBox="0 0 16 15">
            <rect x="5" y="0" width="11" height="15" fill="#d6e3f3" />
            <rect x="0" y="2" width="9" height="11" fill="#2b579a" />
            <text x="1.5" y="10.5" fontSize="8" fontWeight="700" fill="#fff" fontFamily="Roboto">w</text>
          </svg>
        </AppIcon>
        <AppIcon>
          <svg width="15" height="15" viewBox="0 0 15 15">
            <rect width="15" height="15" rx="4" fill="#2d8cff" />
            <rect x="3" y="5" width="6" height="5" rx="1" fill="#fff" />
            <path d="M10 7l2.5-1.5v4L10 8z" fill="#fff" />
          </svg>
        </AppIcon>
        <AppIcon open>
          <svg width="16" height="16" viewBox="0 0 16 16">
            <circle cx="8" cy="8" r="8" fill="#dc4b3e" />
            <path d="M8 8L1 11.5A8 8 0 0 0 8 16z" fill="#4aa55a" />
            <path d="M8 8l7 3.5A8 8 0 0 1 8 16z" fill="#f4c20d" />
            <circle cx="8" cy="8" r="3.5" fill="#4a8ae0" stroke="#fff" />
          </svg>
        </AppIcon>
        <AppIcon>
          <div className="flex h-[15px] w-[15px] items-center justify-center rounded-full bg-[#1d9bd8] text-[10px] font-bold">S</div>
        </AppIcon>
        <AppIcon active open>
          <svg width="16" height="14" viewBox="0 0 16 14">
            <rect x="7" y="0" width="9" height="14" fill="#c9d9cd" />
            <path d="M7 3.5h9M7 7h9M7 10.5h9M11.5 0v14" stroke="#555" />
            <path d="M1 4l4 6M5 4l-4 6" stroke="#fff" strokeWidth="1.3" />
          </svg>
        </AppIcon>
        <AppIcon open>
          <div className="flex h-[17px] w-[15px] items-center justify-center rounded-[2px] bg-[#7ab829] text-[13px] font-bold leading-none text-white">C</div>
        </AppIcon>
        <AppIcon open>
          <svg width="13" height="16" viewBox="0 0 13 16">
            <rect width="13" height="16" fill="#c4161c" />
            <path d="M6.5 3C5 8 4 11 2 13c3-2 6-3 9-2.5C9 9 7.5 6.5 6.5 3z" fill="none" stroke="#fff" />
          </svg>
        </AppIcon>
        <AppIcon open>
          <div className="flex h-[17px] w-[15px] items-center justify-center rounded-[2px] bg-[#e8533c] text-[13px] font-bold leading-none text-white">C</div>
        </AppIcon>
      </div>
      <div className="ml-auto flex items-center text-[9.5px] text-[#e6e6e6]">
        <svg width="15" height="15" viewBox="0 0 15 15">
          <circle cx="7" cy="6" r="5.5" fill="#e8b54a" />
          <ellipse cx="8" cy="11" rx="6" ry="3.5" fill="#cfe2f3" />
        </svg>
        <span className="ml-[6px]">91°F&nbsp; AQI 60</span>
        <svg width="9" height="6" viewBox="0 0 9 6" className="ml-[11px]">
          <path d="M1 5l3.5-4L8 5" stroke="#ddd" fill="none" />
        </svg>
        <svg width="9" height="12" viewBox="0 0 9 12" className="ml-[7px]">
          <path d="M1 2.5A3.5 2 0 0 1 8 2.5M1 9.5A3.5 2 0 0 0 8 9.5" stroke="#ddd" fill="none" />
          <rect x="2.5" y="4" width="4" height="4" fill="none" stroke="#ddd" />
        </svg>
        <svg width="11" height="10" viewBox="0 0 11 10" className="ml-[6px]">
          <path d="M3 0l2.5 2L3 4 0 2zM8 0l3 2-3 2-2.5-2zM3 5l2.5-1.5L8 5 5.5 7zM2 7l3.5 2L9 7v1.5L5.5 10 2 8.5z" fill="#ddd" />
        </svg>
        <svg width="11" height="10" viewBox="0 0 11 10" className="ml-[5px]">
          <path d="M0 3.5h2L5 1v8L2 6.5H0z" fill="none" stroke="#ddd" />
          <path d="M7 3c1 1 1 3 0 4M9 1.5c2 2 2 5 0 7" stroke="#ddd" fill="none" />
        </svg>
        <div className="ml-[6px] flex w-[40px] flex-col items-center pt-[1px] text-[8.5px] leading-[12px]">
          <span>3:11 PM</span>
          <span>8/21/2021</span>
        </div>
        <div className="relative ml-[9px] mr-[10px] h-[16px] w-[16px]">
          <svg width="13" height="14" viewBox="0 0 13 14">
            <path d="M0 0h13v10H6l-3 3v-3H0z" fill="#eee" />
            <path d="M2 3h9M2 5.5h9M2 8h5" stroke="#555" />
          </svg>
          <span className="absolute bottom-0 right-0 flex h-[9px] w-[9px] items-center justify-center rounded-full border border-[#ddd] bg-[#222] text-[6px] leading-none">2</span>
        </div>
      </div>
    </div>
  );
}

export default function App() {
  return (
    <div className="flex h-[720px] w-[1280px] flex-col overflow-hidden bg-[#f8f8f8] font-['Roboto',sans-serif]">
      <TitleBar />
      <TabRow />
      <Ribbon />
      <FormulaBar />
      <Sheet />
      <SheetTabs />
      <StatusBar />
      <Taskbar />
    </div>
  );
}
